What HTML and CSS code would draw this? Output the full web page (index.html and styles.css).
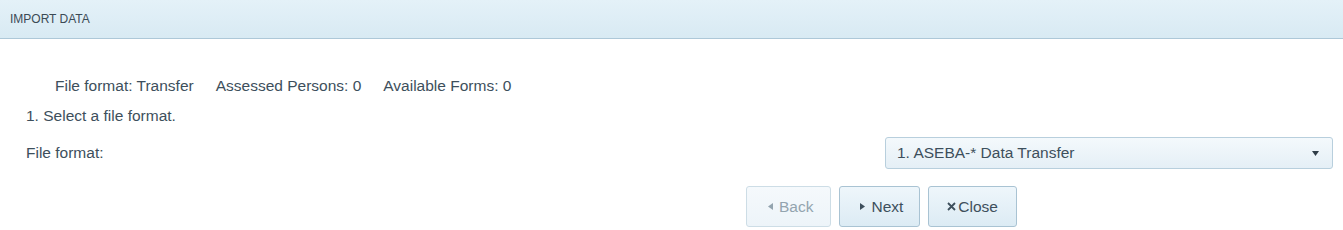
FILE: index.html
```html
<!DOCTYPE html>
<html lang="en">
<head>
  <meta charset="UTF-8">
  <meta name="viewport" content="width=device-width, initial-scale=1.0">
  <title>Import Data</title>
  <link rel="stylesheet" href="styles.css">
</head>
<body>
  <div class="panel-header">IMPORT DATA</div>

  <div class="panel-body">
    <div class="summary">
      <span>File format: Transfer</span>
      <span>Assessed Persons: 0</span>
      <span>Available Forms: 0</span>
    </div>

    <div class="step">1. Select a file format.</div>

    <div class="field">
      <label class="field-label">File format:</label>
      <div class="select">
        <span>1. ASEBA-* Data Transfer</span>
        <svg class="select-arrow" width="7" height="5" viewBox="0 0 7 5"><path d="M0 0h7L3.5 5z" fill="#2f3d47"/></svg>
      </div>
    </div>

    <div class="actions">
      <button class="btn is-disabled">
        <svg class="btn-icon" width="5" height="7" viewBox="0 0 5 7"><path d="M5 0v7L0 3.5z" fill="currentColor"/></svg>Back
      </button>
      <button class="btn btn-next">
        <svg class="btn-icon" width="5" height="7" viewBox="0 0 5 7"><path d="M0 0v7l5-3.5z" fill="currentColor"/></svg>Next
      </button>
      <button class="btn btn-close">
        <svg class="btn-x" width="9" height="9" viewBox="0 0 9 9"><path d="M1 1l7 7M8 1L1 8" stroke="currentColor" stroke-width="1.8"/></svg>Close
      </button>
    </div>
  </div>
</body>
</html>
```

FILE: styles.css
```css
* {
  box-sizing: border-box;
}

body {
  margin: 0;
  background: white;
  color: #3d4f5c;
  font-family: "Liberation Sans", Arial, sans-serif;
  font-size: 15.5px;
}

.panel-header {
  height: 39px;
  padding: 0 10px;
  display: flex;
  align-items: center;
  font-size: 12px;
  color: #3b4a55;
  background: linear-gradient(#e4f1f8, #d8eaf3);
  border-bottom: 1px solid #adc8d8;
}

.panel-body {
  padding: 37px 10px 0 26px;
}

.summary {
  display: flex;
  gap: 22px;
  padding-left: 29px;
  height: 20px;
  align-items: center;
}

.step {
  margin-top: 10px;
  height: 20px;
  display: flex;
  align-items: center;
}

.field {
  margin-top: 11px;
  display: flex;
  align-items: center;
  justify-content: space-between;
}

.select {
  width: 448px;
  height: 32px;
  display: flex;
  align-items: center;
  justify-content: space-between;
  padding: 0 13px 0 11px;
  border: 1px solid #b8cfdd;
  border-radius: 3px;
  background: linear-gradient(#f4f9fc, #e5eff6);
}

.actions {
  margin-top: 17px;
  display: flex;
  gap: 8px;
  padding-left: 720px;
}

.btn {
  height: 41px;
  padding: 0 17px 0 21px;
  display: flex;
  align-items: center;
  font: inherit;
  color: #3d4f5c;
  border: 1px solid #a9c3d3;
  border-radius: 3px;
  background: linear-gradient(#eef6fb, #dcebf4);
}

.btn-next {
  padding: 0 16px 0 20px;
}

.btn-close {
  padding: 0 18px 0 18px;
}

.btn-icon {
  margin-right: 6px;
}

.btn-x {
  margin-right: 2px;
}

.btn.is-disabled {
  color: #93a4af;
  border-color: #cddde6;
  background: linear-gradient(#f5f9fc, #edf4f9);
}
```
